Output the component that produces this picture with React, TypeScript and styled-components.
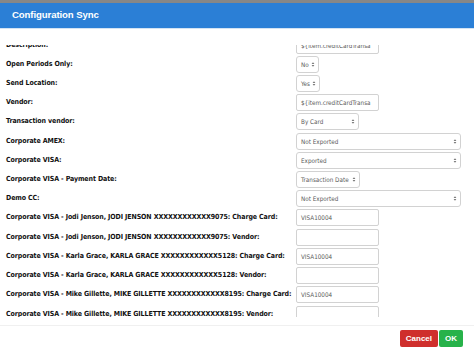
import React from "react";
import styled, { createGlobalStyle } from "styled-components";

const Global = createGlobalStyle`
  html, body { margin: 0; padding: 0; background: #ffffff; }
  body { width: 474px; height: 351px; overflow: hidden; }
`;

const Modal = styled.div`
  width: 474px;
  height: 351px;
  display: flex;
  flex-direction: column;
  background: #ffffff;
  font-family: "DejaVu Sans Condensed", "DejaVu Sans", sans-serif;
`;

const Strip = styled.div`
  height: 3px;
  background: #878787;
  flex: none;
`;

const Header = styled.div`
  height: 26px;
  flex: none;
  display: flex;
  align-items: center;
  padding: 0 0 2px 12px;
  box-sizing: border-box;
  background: #2b7fd6;
  border-bottom: 1px solid #d3e3f3;
`;

const Title = styled.h1`
  margin: 0;
  font-family: "Liberation Sans", Arial, sans-serif;
  font-weight: bold;
  font-size: 9.6px;
  color: #ffffff;
  letter-spacing: -0.1px;
`;

const Body = styled.div`
  flex: none;
  padding: 16px 0 8px 0;
`;

const Scroll = styled.div`
  height: 272px;
  overflow: hidden;
`;

const Form = styled.div`
  margin-top: -8.5px;
  padding-left: 6px;
  display: grid;
  grid-template-columns: 290px 1fr;
  row-gap: 2.23px;
  align-items: center;
`;

const Label = styled.div`
  font-weight: bold;
  font-size: 7px;
  letter-spacing: -0.1px;
  color: #111;
  white-space: nowrap;
  line-height: 17px;
`;

const TextInput = styled.div`
  box-sizing: border-box;
  width: 83px;
  height: 17px;
  border: 1px solid #d2d2d2;
  border-radius: 2px;
  padding-left: 4px;
  display: flex;
  align-items: center;
  font-size: 6.3px;
  color: #5a5a5a;
  white-space: nowrap;
  overflow: hidden;
  background: #fff;
`;

const SelectBox = styled.div<{ $w: number }>`
  box-sizing: border-box;
  width: ${(p) => p.$w}px;
  height: 17px;
  border: 1px solid #d2d2d2;
  border-radius: 3px;
  padding: 0 3px 0 4px;
  display: flex;
  align-items: center;
  justify-content: space-between;
  font-size: 6.3px;
  color: #5a5a5a;
  white-space: nowrap;
  background: #fff;
`;

const Footer = styled.div`
  flex: 1;
  border-top: 1px solid #f0f0f0;
  display: flex;
  justify-content: flex-end;
  align-items: flex-start;
  padding: 4px 11px 0 0;
  gap: 1px;
`;

const Button = styled.button<{ $kind: "danger" | "success" }>`
  height: 17px;
  border: none;
  border-radius: 2px;
  padding: 0 6px;
  background: ${(p) => (p.$kind === "danger" ? "#cf2f2c" : "#27b24a")};
  color: #ffffff;
  font-family: "Liberation Sans", Arial, sans-serif;
  font-weight: bold;
  font-size: 8px;
  cursor: pointer;
`;

const Arrows = () => (
  <svg width="4" height="7" viewBox="0 0 4 7">
    <path d="M0.6 3 L2 1.2 L3.4 3 Z M0.6 4 L2 5.8 L3.4 4 Z" fill="#777" />
  </svg>
);

type Field =
  | { label: string; kind: "text"; value: string }
  | { label: string; kind: "select"; value: string; w: number };

const fields: Field[] = [
  { label: "Description:", kind: "text", value: "${item.creditCardTransa" },
  { label: "Open Periods Only:", kind: "select", value: "No", w: 23 },
  { label: "Send Location:", kind: "select", value: "Yes", w: 24 },
  { label: "Vendor:", kind: "text", value: "${item.creditCardTransa" },
  { label: "Transaction vendor:", kind: "select", value: "By Card", w: 63 },
  { label: "Corporate AMEX:", kind: "select", value: "Not Exported", w: 165 },
  { label: "Corporate VISA:", kind: "select", value: "Exported", w: 165 },
  { label: "Corporate VISA - Payment Date:", kind: "select", value: "Transaction Date", w: 64 },
  { label: "Demo CC:", kind: "select", value: "Not Exported", w: 165 },
  { label: "Corporate VISA - Jodi Jenson, JODI JENSON XXXXXXXXXXXX9075: Charge Card:", kind: "text", value: "VISA10004" },
  { label: "Corporate VISA - Jodi Jenson, JODI JENSON XXXXXXXXXXXX9075: Vendor:", kind: "text", value: "" },
  { label: "Corporate VISA - Karla Grace, KARLA GRACE XXXXXXXXXXXX5128: Charge Card:", kind: "text", value: "VISA10004" },
  { label: "Corporate VISA - Karla Grace, KARLA GRACE XXXXXXXXXXXX5128: Vendor:", kind: "text", value: "" },
  { label: "Corporate VISA - Mike Gillette, MIKE GILLETTE XXXXXXXXXXXX8195: Charge Card:", kind: "text", value: "VISA10004" },
  { label: "Corporate VISA - Mike Gillette, MIKE GILLETTE XXXXXXXXXXXX8195: Vendor:", kind: "text", value: "" },
];

export default function App() {
  return (
    <>
      <Global />
      <Modal>
        <Strip />
        <Header>
          <Title>Configuration Sync</Title>
        </Header>
        <Body>
          <Scroll>
            <Form>
              {fields.map((f, i) => (
                <React.Fragment key={i}>
                  <Label>{f.label}</Label>
                  {f.kind === "text" ? (
                    <TextInput>{f.value}</TextInput>
                  ) : (
                    <SelectBox $w={f.w}>
                      <span>{f.value}</span>
                      <Arrows />
                    </SelectBox>
                  )}
                </React.Fragment>
              ))}
            </Form>
          </Scroll>
        </Body>
        <Footer>
          <Button $kind="danger">Cancel</Button>
          <Button $kind="success">OK</Button>
        </Footer>
      </Modal>
    </>
  );
}
